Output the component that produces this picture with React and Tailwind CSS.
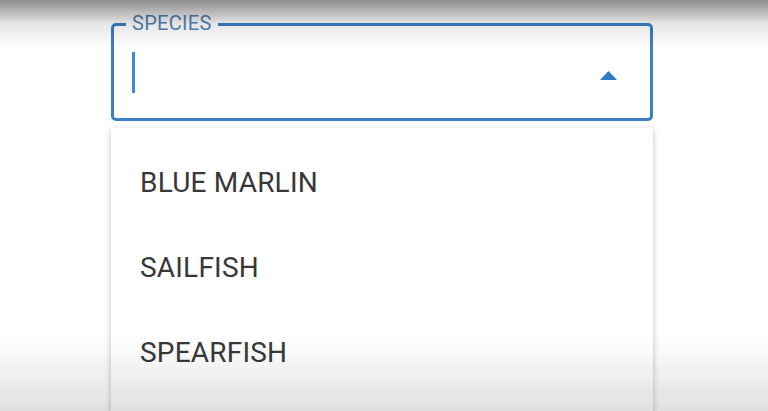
import React from "react";

export default function App() {
  const items = ["BLUE MARLIN", "SAILFISH", "SPEARFISH"];
  return (
    <div className="relative h-[411px] w-[768px] overflow-hidden bg-white font-['Roboto','Liberation_Sans',sans-serif]">
      <div className="flex flex-col pl-[111px] pr-[115px] pt-[23px]">
        <div className="relative flex h-[98px] items-center rounded-[5px] border-[3px] border-[#3a7fc3] pl-[18px] pr-[33px]">
          <span className="absolute -top-[14px] left-[12px] bg-white px-[6px] text-[20px] leading-[22px] tracking-[0.3px] text-[#5286b6]">
            SPECIES
          </span>
          <div className="mt-[1px] h-[41px] w-[2.5px] bg-[#3f8ad4]" />
          <div className="flex-1" />
          <svg width="17" height="9" viewBox="0 0 17 9" className="mt-[6px]">
            <path d="M0 9 L8.5 0 L17 9 Z" fill="#2f7cc4" />
          </svg>
        </div>
        <div className="mt-[7px] h-[300px] rounded-[3px] bg-white pt-[12px] shadow-[0_2px_6px_rgba(0,0,0,0.25)]">
          {items.map((t) => (
            <div key={t} className="flex h-[85px] items-center pl-[29px] text-[28px] leading-none tracking-[0.2px] text-[#383838]">
              {t}
            </div>
          ))}
        </div>
      </div>
      <div className="pointer-events-none absolute inset-x-0 top-0 h-[48px] bg-gradient-to-b from-[rgba(0,0,0,0.45)] via-[rgba(0,0,0,0.1)] to-transparent" />
      <div className="pointer-events-none absolute inset-x-0 bottom-0 h-[75px] bg-gradient-to-t from-[rgba(0,0,0,0.12)] to-transparent" />
    </div>
  );
}
